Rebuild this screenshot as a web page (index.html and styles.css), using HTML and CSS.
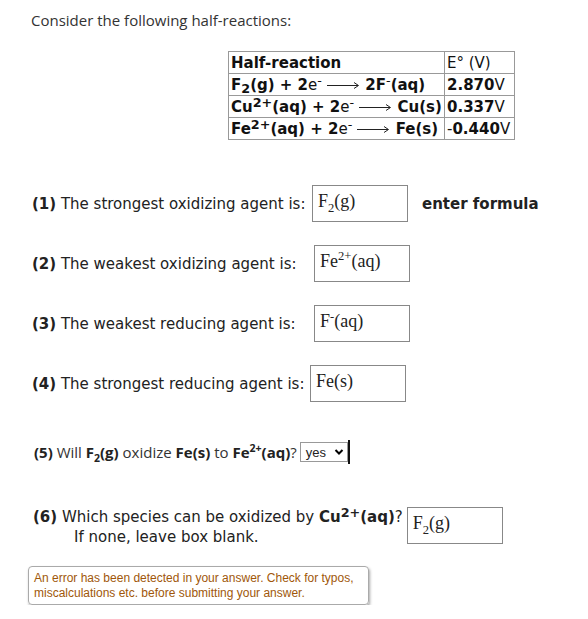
FILE: index.html
```html
<!doctype html>
<html>
<head>
<meta charset="utf-8">
<title>Half-reactions</title>
<link rel="stylesheet" href="styles.css">
</head>
<body>
<p class="intro">Consider the following half-reactions:</p>

<table class="halfrx">
	<tr><th>Half-reaction</th><td class="ehead">E° (V)</td></tr>
	<tr><td>F<sub>2</sub>(g) + 2<span class="thin">e<sup>-</sup></span> <svg class="arr" width="33" height="8" viewBox="0 0 33 8"><path d="M0 4.5 H31 M27 1.5 L31.5 4.5 L27 7.5" fill="none" stroke="#222" stroke-width="1"/></svg> 2F<sup class="thin">-</sup>(aq)</td><td>2.870<span class="thin">V</span></td></tr>
	<tr><td>Cu<sup>2+</sup>(aq) + 2<span class="thin">e<sup>-</sup></span> <svg class="arr" width="33" height="8" viewBox="0 0 33 8"><path d="M0 4.5 H31 M27 1.5 L31.5 4.5 L27 7.5" fill="none" stroke="#222" stroke-width="1"/></svg> Cu(s)</td><td>0.337<span class="thin">V</span></td></tr>
	<tr><td>Fe<sup>2+</sup>(aq) + 2<span class="thin">e<sup>-</sup></span> <svg class="arr" width="33" height="8" viewBox="0 0 33 8"><path d="M0 4.5 H31 M27 1.5 L31.5 4.5 L27 7.5" fill="none" stroke="#222" stroke-width="1"/></svg> Fe(s)</td><td><span class="thin">-</span>0.440<span class="thin">V</span></td></tr>
</table>

<div class="qs">
	<div class="q">
		<span class="lbl"><b>(1)</b> The strongest oxidizing agent is:</span>
		<span class="ans">F<sub>2</sub>(g)</span>
		<b class="hint">enter formula</b>
	</div>
	<div class="q">
		<span class="lbl"><b>(2)</b> The weakest oxidizing agent is:</span>
		<span class="ans a2">Fe<sup>2+</sup>(aq)</span>
	</div>
	<div class="q">
		<span class="lbl"><b>(3)</b> The weakest reducing agent is:</span>
		<span class="ans a3">F<sup>-</sup>(aq)</span>
	</div>
	<div class="q">
		<span class="lbl"><b>(4)</b> The strongest reducing agent is:</span>
		<span class="ans a4">Fe(s)</span>
	</div>
</div>

<div class="q5">
	<b>(5)</b> Will <b>F<sub>2</sub>(g)</b> oxidize <b>Fe(s)</b> to <b>Fe<sup>2+</sup>(aq)</b>?<span class="sel">yes <svg width="10" height="8" viewBox="0 0 10 8"><path d="M1.5 2 L5 5.5 L8.5 2" fill="none" stroke="#000" stroke-width="2"/></svg></span><span class="caret"></span>
</div>

<div class="q6">
	<div class="q6txt">
		<div><b>(6)</b> Which species can be oxidized by <b>Cu<sup>2+</sup>(aq)</b>?</div>
		<div class="none">If none, leave box blank.</div>
	</div>
	<span class="ans a6">F<sub>2</sub>(g)</span>
</div>

<div class="err">An error has been detected in your answer. Check for typos, miscalculations etc. before submitting your answer.</div>
</body>
</html>
```

FILE: styles.css
```css
* { margin:0; padding:0; }
body { background:#fff; color:#222; font-family:"DejaVu Sans", Verdana, sans-serif; }
sub, sup { font-size:70%; line-height:0; position:relative; vertical-align:baseline; }
sub { top:4px; }
sup { top:-6px; }

.intro { font-family:"Open Sans", sans-serif; font-size:15px; line-height:20px; color:#333; padding:10px 0 0 31px; }

.halfrx { border-collapse:collapse; margin:21px 0 0 228px; font-size:15px; font-weight:bold; color:#111; }
.halfrx th, .halfrx td { border:1px solid #999; height:21px; padding:0 2px; text-align:left; white-space:nowrap; }
.halfrx th { width:211px; }
.halfrx td.ehead { font-weight:normal; width:65px; }
.halfrx sup, .halfrx sub { font-size:85%; }
.halfrx sub { top:3px; }
.halfrx sup { top:-5px; }
.thin { font-weight:normal; }
.arr { vertical-align:1px; }

.qs { margin-top:45px; padding-left:32px; }
.q { display:flex; align-items:center; height:37px; margin-bottom:23px; font-size:15px; white-space:nowrap; }
.lbl { width:280px; }
.ans { display:inline-block; box-sizing:border-box; width:96px; height:37px; border:1px solid #888; padding:5px 0 0 5px; font-family:"Liberation Serif", serif; font-size:18px; color:#222; }
.ans sub { top:5px; }
.ans sup { top:-7px; }
.a2 { margin-left:2px; }
.a3 { margin-left:2px; }
.a4 { margin-left:-2px; }
.hint { margin-left:14px; }

.q5 { margin:38px 0 0 34px; height:24px; font-family:"Open Sans", sans-serif; font-size:15px; color:#333; display:flex; align-items:center; white-space:pre; }
.q5 b { color:#222; }
.sel { display:inline-flex; align-items:center; gap:4px; height:18px; margin-left:3px; border:1px solid #999; padding:0 3px 0 5px; font-family:"Liberation Sans", Arial, sans-serif; font-size:13px; color:#222; }
.caret { display:inline-block; width:2px; height:24px; background:#111; margin-left:0; }

.q6 { display:flex; margin:43px 0 0 33px; font-size:15px; }
.q6txt { line-height:20px; }
.q6txt sup { font-size:85%; top:-5px; }
.none { padding-left:41px; }
.a6 { margin-left:4px; width:96px; height:37px; }

.err { width:341px; box-sizing:border-box; margin:19px 0 0 28px; padding:4px 5px 3px; border:1px solid #aaa; border-radius:4px; box-shadow:1px 2px 3px rgba(0,0,0,.35); font-family:"Liberation Sans", Arial, sans-serif; font-size:12px; line-height:15px; color:#a0570a; }
```
